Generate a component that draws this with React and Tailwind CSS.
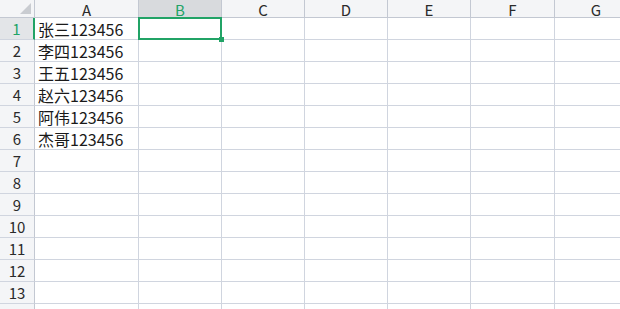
const cols = ["A", "B", "C", "D", "E", "F", "G"];
const widths = [104, 83, 83, 83, 83, 84, 83];
const data = ["张三123456", "李四123456", "王五123456", "赵六123456", "阿伟123456", "杰哥123456"];
const rows = Array.from({ length: 14 }, (_, i) => i + 1);

export default function App() {
  return (
    <div
      className="w-[620px] h-[309px] overflow-hidden bg-white text-[#1a1a1a]"
      style={{ fontFamily: '"Noto Sans CJK SC", "Liberation Sans", sans-serif' }}
    >
      {/* header row */}
      <div className="flex h-[18px]">
        <div className="relative w-[35px] shrink-0 bg-[#f4f5f7] border-r border-b border-[#c3c8d2]">
          <div className="absolute right-[3px] bottom-[3px] w-0 h-0 border-l-[11px] border-l-transparent border-b-[11px] border-b-[#c9ccd1]" />
        </div>
        {cols.map((c, i) => (
          <div
            key={c}
            className={
              "shrink-0 flex items-center justify-center pt-px text-[15px] leading-none border-r border-b border-[#c3c8d2] " +
              (c === "B" ? "bg-[#d8dadd] text-[#21a366]" : "bg-[#f4f5f7] text-[#2a2a2a]")
            }
            style={{ width: widths[i] }}
          >
            {c}
          </div>
        ))}
      </div>

      {rows.map((r) => (
        <div key={r} className="flex h-[22px]">
          <div
            className={
              "w-[35px] shrink-0 flex items-center justify-center text-[15px] leading-none border-b border-[#d0d5df] " +
              (r === 1
                ? "bg-[#e3e5e8] text-[#21a366] border-r-2 border-r-[#21a366]"
                : "bg-[#f4f5f7] text-[#2a2a2a] border-r border-r-[#c3c8d2]")
            }
          >
            {r}
          </div>
          {cols.map((c, i) => (
            <div
              key={c}
              className="relative shrink-0 flex items-center pl-[3px] text-[16px] leading-none whitespace-nowrap border-r border-b border-[#d0d5df]"
              style={{ width: widths[i] }}
            >
              {c === "A" ? data[r - 1] : ""}
              {c === "B" && r === 1 && (
                <>
                  <div className="absolute z-10 -left-px -top-px right-[-1px] bottom-[-1px] border-2 border-[#21a366]" />
                  <div className="absolute z-10 right-[-3px] bottom-[-3px] w-[5px] h-[5px] bg-[#21a366]" />
                </>
              )}
            </div>
          ))}
        </div>
      ))}
    </div>
  );
}
